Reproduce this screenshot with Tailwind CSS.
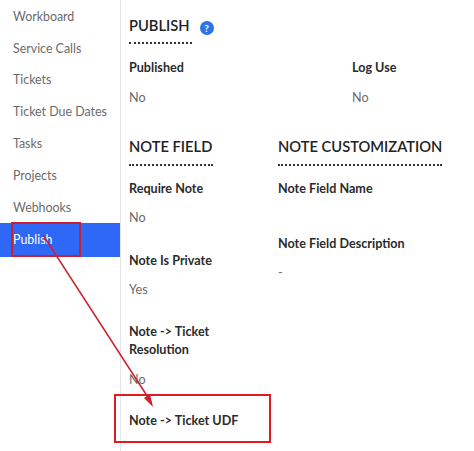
<!DOCTYPE html>
<html lang="en">
<head>
  <meta charset="UTF-8" />
  <title>Publish</title>
  <script src="https://cdn.jsdelivr.net/npm/@tailwindcss/browser@4"></script>
</head>
<body class="bg-white font-['Lato',sans-serif] text-[12.6px] text-[#6b6b6b] overflow-hidden">
  <div class="relative flex h-[451px] w-[474px] overflow-hidden">

    <!-- sidebar -->
    <nav class="w-[121px] shrink-0 border-r border-[#e3e5e8] pt-[1px] text-[12.4px]">
      <div class="flex h-[31.9px] items-center pl-[13px]">Workboard</div>
      <div class="flex h-[31.9px] items-center pl-[13px]">Service Calls</div>
      <div class="flex h-[31.9px] items-center pl-[13px]">Tickets</div>
      <div class="flex h-[31.9px] items-center pl-[13px]">Ticket Due Dates</div>
      <div class="flex h-[31.9px] items-center pl-[13px]">Tasks</div>
      <div class="flex h-[31.9px] items-center pl-[13px]">Projects</div>
      <div class="flex h-[31.9px] items-center pl-[13px]">Webhooks</div>
      <div class="-mt-[1px] flex h-[34px] items-center bg-[#2f67f6] pl-[13px] text-white">Publish</div>
    </nav>

    <!-- content -->
    <main class="flex-1 pl-[8px] pt-[14px]">
      <div class="flex items-center gap-[10px]">
        <h2 class="text-[14.7px] leading-[22px] font-semibold text-[#222]">PUBLISH</h2>
        <span class="mt-[5px] flex h-[14px] w-[14px] items-center justify-center rounded-full bg-[#2f73e8] text-[10px] leading-none font-bold text-white">?</span>
      </div>
      <div class="mt-[6px] w-[63px] border-t-2 border-dotted border-[#333]"></div>

      <div class="mt-[15px] flex">
        <div class="w-[223px]">
          <div class="h-[18px] leading-[18px] font-bold text-[#2b2b2b]">Published</div>
          <div class="mt-[12px] h-[18px] leading-[18px]">No</div>
        </div>
        <div>
          <div class="h-[18px] leading-[18px] font-bold text-[#2b2b2b]">Log Use</div>
          <div class="mt-[12px] h-[18px] leading-[18px]">No</div>
        </div>
      </div>

      <div class="mt-[28px] flex">
        <div class="w-[149px]">
          <h2 class="text-[14.7px] leading-[22px] font-semibold text-[#222]">NOTE FIELD</h2>
          <div class="mt-[7px] w-[84px] border-t-2 border-dotted border-[#333]"></div>
          <div class="mt-[14px] h-[18px] leading-[18px] font-bold text-[#2b2b2b]">Require Note</div>
          <div class="mt-[11px] h-[18px] leading-[18px]">No</div>
          <div class="mt-[25px] h-[18px] leading-[18px] font-bold text-[#2b2b2b]">Note Is Private</div>
          <div class="mt-[11px] h-[18px] leading-[18px]">Yes</div>
          <div class="mt-[24px] leading-[18px] font-bold text-[#2b2b2b]">Note -&gt; Ticket<br />Resolution</div>
          <div class="mt-[12px] h-[18px] leading-[18px]">No</div>
          <div class="mt-[23px] h-[18px] leading-[18px] font-bold text-[#2b2b2b]">Note -&gt; Ticket UDF</div>
        </div>
        <div>
          <h2 class="text-[14.7px] leading-[22px] font-semibold text-[#222]">NOTE CUSTOMIZATION</h2>
          <div class="mt-[7px] w-[164px] border-t-2 border-dotted border-[#333]"></div>
          <div class="mt-[14px] h-[18px] leading-[18px] font-bold text-[#2b2b2b]">Note Field Name</div>
          <div class="mt-[37px] h-[18px] leading-[18px] font-bold text-[#2b2b2b]">Note Field Description</div>
          <div class="mt-[11px] h-[18px] leading-[18px]">-</div>
        </div>
      </div>
    </main>

    <!-- annotation drawn on top of the screenshot -->
    <div class="absolute left-[11px] top-[222px] h-[35px] w-[70px] border-2 border-[#c8202e]"></div>
    <div class="absolute left-[114px] top-[394px] h-[49px] w-[157px] border-2 border-[#e01b24]"></div>
    <svg class="absolute left-0 top-0" width="474" height="451" viewBox="0 0 474 451" fill="none">
      <line x1="43" y1="235" x2="151" y2="402" stroke="#d0202e" stroke-width="1.5" />
      <polygon points="153,407 144,398 150,394" fill="#d0202e" />
    </svg>
  </div>
</body>
</html>
